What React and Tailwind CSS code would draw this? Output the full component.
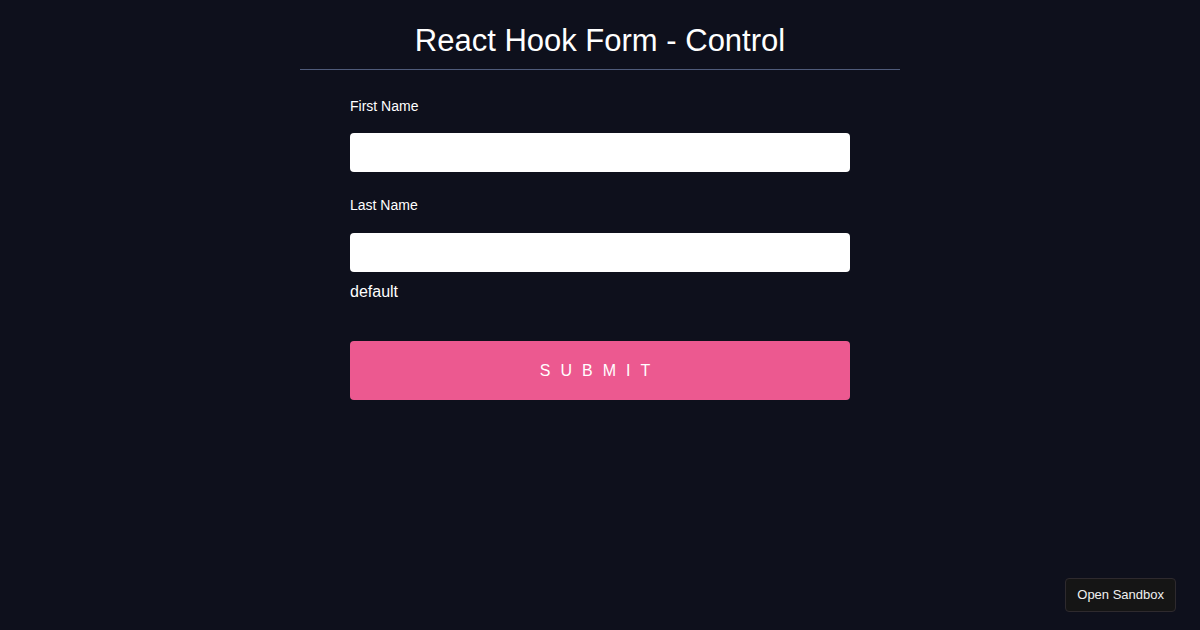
import React from "react";

const App = () => {
  return (
    <div
      className="min-h-[630px] w-full bg-[#0e101c] text-white relative"
      style={{ fontFamily: '"Liberation Sans", Arial, sans-serif' }}
    >
      <div className="w-[600px] mx-auto">
        {/* Header */}
        <h1 className="text-[31px] leading-[37px] font-normal text-center pt-[22px] pb-[10px] border-b border-[#4f5b7a]">
          React Hook Form - Control
        </h1>

        {/* Form */}
        <form className="w-[500px] mx-auto pt-[28px]">
          <label className="block text-[14px] leading-[16px] text-white">
            First Name
          </label>
          <input
            type="text"
            className="block w-full h-[39px] mt-[19px] rounded-[4px] bg-white text-black px-[10px] outline-none"
          />

          <label className="block text-[14px] leading-[16px] text-white mt-[25px]">
            Last Name
          </label>
          <input
            type="text"
            className="block w-full h-[39px] mt-[20px] rounded-[4px] bg-white text-black px-[10px] outline-none"
          />
          <p className="text-[16px] leading-[18px] mt-[11px]">default</p>

          <button
            type="button"
            className="block w-full h-[59px] mt-[40px] rounded-[4px] bg-[#ec5990] text-white text-[16px] uppercase tracking-[10px]"
          >
            Submit
          </button>
        </form>
      </div>

      {/* Sandbox link */}
      <div className="absolute right-[24px] bottom-[18px]">
        <button className="h-[34px] px-[11px] rounded-[4px] bg-[#151515] border border-[#2e2a2e] text-[13px] text-[#f0f0f0]">
          Open Sandbox
        </button>
      </div>
    </div>
  );
};

export default App;
